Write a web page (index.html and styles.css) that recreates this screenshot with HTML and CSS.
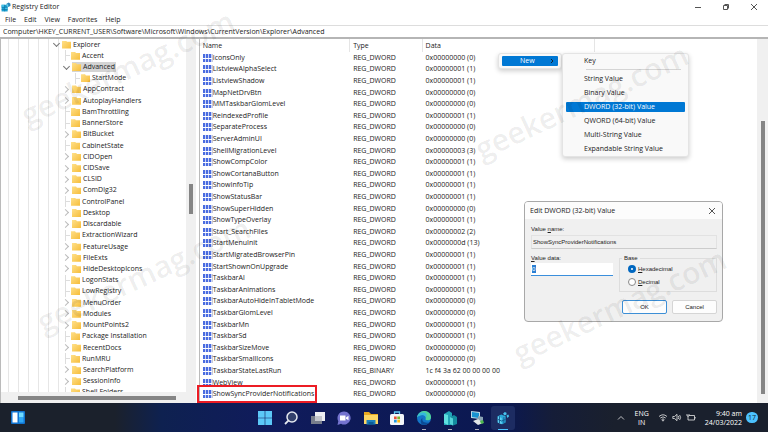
FILE: index.html
```html
<!DOCTYPE html>
<html lang="en">
<head>
<meta charset="utf-8">
<title>Registry Editor</title>
<link rel="stylesheet" href="styles.css">
</head>
<body>
<main class="window">
  <header class="titlebar">
    <svg class="app-icon" viewBox="0 0 18 18"><path d="M1 5h11v12H1z" fill="#1b9fd0"/><path d="M1 5h5v4H1zM7 10h5v3H7z" fill="#46c3e8"/><path d="M1 9.500h11M1 13.500h11M6.500 5v12" stroke="#0b6f9f"/><path d="M10 3l4-2 3 2v4l-4 2-3-2z" fill="#2b86b8"/><path d="M10 3l3 2v4l-3-2z" fill="#65d3f0"/></svg>
    <h1>Registry Editor</h1>
    <div class="controls">
      <button aria-label="Minimize"><svg viewBox="0 0 8 8"><path d="M1 4.500h6"/></svg></button>
      <button aria-label="Restore"><svg viewBox="0 0 8 8"><path d="M1.500 2.500h4v4h-4zM2.500 1.500h4v4"/></svg></button>
      <button aria-label="Close"><svg viewBox="0 0 8 8"><path d="M1 1l6 6M7 1L1 7"/></svg></button>
    </div>
  </header>
  <nav class="menubar"><button>File</button><button>Edit</button><button>View</button><button>Favorites</button><button>Help</button></nav>
  <input class="address" aria-label="Address" value="Computer\HKEY_CURRENT_USER\Software\Microsoft\Windows\CurrentVersion\Explorer\Advanced">
  <div class="panes">
    <section class="tree-pane">
      <ul class="tree">
        <li class="root open"><span>Explorer</span></li>
        <li class="leaf"><span>Accent</span></li>
        <li class="open selected"><span>Advanced</span></li>
        <li class="leaf deep"><span>StartMode</span></li>
        <li><span>AppContract</span></li>
        <li><span>AutoplayHandlers</span></li>
        <li class="leaf"><span>BamThrottling</span></li>
        <li class="leaf"><span>BannerStore</span></li>
        <li><span>BitBucket</span></li>
        <li class="leaf"><span>CabinetState</span></li>
        <li><span>CIDOpen</span></li>
        <li><span>CIDSave</span></li>
        <li><span>CLSID</span></li>
        <li><span>ComDlg32</span></li>
        <li class="leaf"><span>ControlPanel</span></li>
        <li><span>Desktop</span></li>
        <li><span>Discardable</span></li>
        <li class="leaf"><span>ExtractionWizard</span></li>
        <li><span>FeatureUsage</span></li>
        <li><span>FileExts</span></li>
        <li><span>HideDesktopIcons</span></li>
        <li class="leaf"><span>LogonStats</span></li>
        <li class="leaf"><span>LowRegistry</span></li>
        <li><span>MenuOrder</span></li>
        <li><span>Modules</span></li>
        <li><span>MountPoints2</span></li>
        <li class="leaf"><span>Package Installation</span></li>
        <li><span>RecentDocs</span></li>
        <li class="leaf"><span>RunMRU</span></li>
        <li><span>SearchPlatform</span></li>
        <li><span>SessionInfo</span></li>
        <li class="leaf"><span>Shell Folders</span></li>
      </ul>
      <div class="vbar tree-vbar"><i></i></div>
      <div class="hbar"><i></i></div>
    </section>
    <section class="list-pane">
      <table class="values">
        <thead><tr><th>Name</th><th>Type</th><th>Data</th></tr></thead>
        <tbody>
          <tr><td>IconsOnly</td><td>REG_DWORD</td><td>0x00000000 (0)</td></tr>
          <tr><td>ListviewAlphaSelect</td><td>REG_DWORD</td><td>0x00000001 (1)</td></tr>
          <tr><td>ListviewShadow</td><td>REG_DWORD</td><td>0x00000001 (1)</td></tr>
          <tr><td>MapNetDrvBtn</td><td>REG_DWORD</td><td>0x00000000 (0)</td></tr>
          <tr><td>MMTaskbarGlomLevel</td><td>REG_DWORD</td><td>0x00000000 (0)</td></tr>
          <tr><td>ReindexedProfile</td><td>REG_DWORD</td><td>0x00000001 (1)</td></tr>
          <tr><td>SeparateProcess</td><td>REG_DWORD</td><td>0x00000000 (0)</td></tr>
          <tr><td>ServerAdminUI</td><td>REG_DWORD</td><td>0x00000000 (0)</td></tr>
          <tr><td>ShellMigrationLevel</td><td>REG_DWORD</td><td>0x00000003 (3)</td></tr>
          <tr><td>ShowCompColor</td><td>REG_DWORD</td><td>0x00000001 (1)</td></tr>
          <tr><td>ShowCortanaButton</td><td>REG_DWORD</td><td>0x00000001 (1)</td></tr>
          <tr><td>ShowInfoTip</td><td>REG_DWORD</td><td>0x00000001 (1)</td></tr>
          <tr><td>ShowStatusBar</td><td>REG_DWORD</td><td>0x00000001 (1)</td></tr>
          <tr><td>ShowSuperHidden</td><td>REG_DWORD</td><td>0x00000000 (0)</td></tr>
          <tr><td>ShowTypeOverlay</td><td>REG_DWORD</td><td>0x00000001 (1)</td></tr>
          <tr><td>Start_SearchFiles</td><td>REG_DWORD</td><td>0x00000002 (2)</td></tr>
          <tr><td>StartMenuInit</td><td>REG_DWORD</td><td>0x0000000d (13)</td></tr>
          <tr><td>StartMigratedBrowserPin</td><td>REG_DWORD</td><td>0x00000001 (1)</td></tr>
          <tr><td>StartShownOnUpgrade</td><td>REG_DWORD</td><td>0x00000001 (1)</td></tr>
          <tr><td>TaskbarAl</td><td>REG_DWORD</td><td>0x00000001 (1)</td></tr>
          <tr><td>TaskbarAnimations</td><td>REG_DWORD</td><td>0x00000001 (1)</td></tr>
          <tr><td>TaskbarAutoHideInTabletMode</td><td>REG_DWORD</td><td>0x00000000 (0)</td></tr>
          <tr><td>TaskbarGlomLevel</td><td>REG_DWORD</td><td>0x00000000 (0)</td></tr>
          <tr><td>TaskbarMn</td><td>REG_DWORD</td><td>0x00000001 (1)</td></tr>
          <tr><td>TaskbarSd</td><td>REG_DWORD</td><td>0x00000001 (1)</td></tr>
          <tr><td>TaskbarSizeMove</td><td>REG_DWORD</td><td>0x00000000 (0)</td></tr>
          <tr><td>TaskbarSmallIcons</td><td>REG_DWORD</td><td>0x00000000 (0)</td></tr>
          <tr><td>TaskbarStateLastRun</td><td>REG_BINARY</td><td>1c f4 3a 62 00 00 00 00</td></tr>
          <tr><td>WebView</td><td>REG_DWORD</td><td>0x00000001 (1)</td></tr>
          <tr class="marked"><td>ShowSyncProviderNotifications</td><td>REG_DWORD</td><td>0x00000000 (0)</td></tr>
        </tbody>
      </table>
      <div class="vbar list-vbar"><i></i></div>
    </section>
  </div>
</main>

<div class="menu menu-root"><button class="active">New<svg viewBox="0 0 4 6"><path d="M1 1l2 2-2 2" fill="none" stroke="#123"/></svg></button></div>
<div class="menu menu-sub">
  <button>Key</button>
  <hr>
  <button>String Value</button>
  <button>Binary Value</button>
  <button class="active">DWORD (32-bit) Value</button>
  <button>QWORD (64-bit) Value</button>
  <button>Multi-String Value</button>
  <button>Expandable String Value</button>
</div>

<form class="dialog">
  <div class="dialog-title"><h2>Edit DWORD (32-bit) Value</h2><button type="button" aria-label="Close dialog"><svg viewBox="0 0 8 8"><path d="M1 1l6 6M7 1L1 7"/></svg></button></div>
  <div class="dialog-body">
    <label for="vname">Value <u>n</u>ame:</label>
    <input id="vname" class="name-box" readonly value="ShowSyncProviderNotifications">
    <div class="dialog-row">
      <div class="data-field">
        <label for="vdata"><u>V</u>alue data:</label>
        <input id="vdata" class="data-box" value="0">
      </div>
      <fieldset>
        <legend>Base</legend>
        <label><input type="radio" name="base" checked><span><u>H</u>exadecimal</span></label>
        <label><input type="radio" name="base"><span><u>D</u>ecimal</span></label>
      </fieldset>
    </div>
    <div class="dialog-actions"><button type="button" class="primary">OK</button><button type="button">Cancel</button></div>
  </div>
</form>

<footer class="taskbar">
  <button class="widgets" aria-label="Widgets"><svg viewBox="0 0 14 13"><rect width="14" height="13" rx="1" fill="#1173cf"/><path d="M1.500 1.500h5v10h-5z" fill="#fff"/><path d="M8 1.500h4.500v5H8z" fill="#6fdcff"/><path d="M8 6.500h4.500v5H8z" fill="#2fa8f5"/></svg></button>
  <div class="apps">
    <button aria-label="Start"><svg viewBox="0 0 16 16"><path d="M1 1h6.700v6.700H1zM8.300 1H15v6.700H8.300zM1 8.300h6.700V15H1zM8.300 8.300H15V15H8.300z" fill="#5cc8f7"/></svg></button>
    <button aria-label="Search"><svg viewBox="0 0 16 16"><circle cx="9" cy="7" r="5" fill="#33406c" stroke="#e4e8f0" stroke-width="1.500"/><path d="M5.400 10.600L2 14" stroke="#e4e8f0" stroke-width="1.800"/></svg></button>
    <button aria-label="Task view"><svg viewBox="0 0 16 16"><path d="M1 6h11v8H1z" fill="#777d8c"/><path d="M5 2h10v9H5z" fill="#eceef2"/><path d="M5 6h7v5H5z" fill="#c2c5cc"/></svg></button>
    <button aria-label="Chat"><svg viewBox="0 0 16 16"><path d="M8 1.500a6.500 6.500 0 1 1-3 12.200L1.500 15l.8-3.800A6.500 6.500 0 0 1 8 1.500z" fill="#7473cf"/><path d="M4 5.500h5.500v5H4zM10 7.500l2.500-1.700v4.400L10 8.800z" fill="#fff"/></svg></button>
    <button aria-label="File Explorer"><svg viewBox="0 0 16 16"><path d="M1 2h5l2 2h7v10H1z" fill="#e9a820"/><path d="M1 5h14v9H1z" fill="#fdd663"/><path d="M3.500 10h9v4.500h-9z" fill="#1c7fbd"/><path d="M5.500 12h5v2.500h-5z" fill="#0b5d97"/></svg></button>
    <button aria-label="Store"><svg viewBox="0 0 16 16"><path d="M5.500 5V2h5v3" fill="none" stroke="#61c9f3" stroke-width="1.300"/><rect x="1" y="4" width="14" height="11" rx="1.500" fill="#f3f6f9"/><path d="M5 6.500h2.700v2.700H5z" fill="#e94f35"/><path d="M8.300 6.500H11v2.700H8.300z" fill="#7fb82b"/><path d="M5 9.800h2.700v2.700H5z" fill="#2399e0"/><path d="M8.300 9.800H11v2.700H8.300z" fill="#f9b914"/></svg></button>
    <button class="running" aria-label="Edge"><svg viewBox="0 0 16 16"><circle cx="8" cy="8" r="7" fill="#1376c9"/><path d="M1 7.500C2 2.500 6 .8 9 1c4 .3 6.500 3.500 6 7-.5 2.500-4 3-5.500 1.500C10.500 7 9 5 6.500 5 4 5 2 6 1 7.500z" fill="#4fd39b"/><path d="M1 7.500C2 4 4 2.500 7 2.500c3.500 0 4.500 2.800 3 5C9.500 6 8 5 6 5 4 5 2 6 1 7.500z" fill="#35b8dc"/><path d="M6.500 8c-1 3 1.500 5.500 6.500 4.500-2 2.500-5 3-7.500 1.500C4 12 4.500 9 6.500 8z" fill="#0b4b96"/></svg></button>
    <button class="running" aria-label="Server"><svg viewBox="0 0 16 16"><path d="M2 4l5-3 3 2v12H2z" fill="#22a6b8"/><path d="M2 4l4 1v10l-4-2z" fill="#5fe0e0"/><path d="M8 7l4-2 3 2v7l-4 1.500L8 14z" fill="#148c9f"/><path d="M8 7l3 1.500v7L8 14z" fill="#53d3d8"/></svg></button>
    <button class="running" aria-label="Remote desktop"><svg viewBox="0 0 16 16"><path d="M2 1l9 1v7L2 8z" fill="#b9d8e8"/><path d="M3 2l7 1v5L3 7z" fill="#1792d1"/><path d="M9 6l5 1v5l-5 1z" fill="#8aa4b4"/><path d="M4 11l5-2 5 4-5 2z" fill="#e2e6e8"/><path d="M11 11l3-1 1 3-3 1z" fill="#4cb74f"/></svg></button>
    <button class="running current" aria-label="Registry Editor"><svg viewBox="0 0 16 16"><path d="M2 6l4-2 5 2v7l-4 2-5-2z" fill="#2aa8d8"/><path d="M2 6l4.500 2v7L2 13z" fill="#60d2f4"/><path d="M4 6v8M2 9.500l4.500 2 4.500-2M9 7v7" stroke="#11568c" fill="none"/><path d="M8 3l2-2 2 1v2l-2 1zM12 5l2-1 1 2-2 2z" fill="#47c4ee"/></svg></button>
  </div>
  <div class="tray">
    <svg class="chevron" viewBox="0 0 10 8"><path d="M2 6l3-3 3 3"/></svg>
    <div class="lang">ENG<br>IN</div>
    <svg viewBox="0 0 10 9"><path d="M1 3.500Q5 0 9 3.500M2.300 5Q5 2.700 7.700 5M3.600 6.500Q5 5.200 6.400 6.500"/><circle cx="5" cy="7.500" r=".6"/></svg>
    <svg viewBox="0 0 10 9"><path d="M.8 3.500h1.700L5 1.300v6.400L2.500 5.500H.8zM6.300 3q1 1.500 0 3M7.600 2q2 2.500 0 5"/></svg>
    <svg viewBox="0 0 10 9"><path d="M3 2.500h5.500v4.500H2V5M9.200 4v1.500M1 1v2h2V1M2 3v2"/></svg>
    <div class="clock">9:40 am<br>24/03/2022</div>
    <span class="badge">17</span>
  </div>
</footer>

<span class="watermark wm-a">geekermag.com</span>
<span class="watermark wm-b">geekermag.com</span>
<span class="watermark wm-c">geekermag.com</span>
<span class="watermark wm-d">geekermag.com</span>
</body>
</html>
```
FILE: styles.css
```css
* { box-sizing: border-box; }
body {
  margin: 0;
  height: 100vh;
  display: flex;
  flex-direction: column;
  overflow: hidden;
  position: relative;
  background: #fff;
  color: #222;
  font: 7px/10px "Open Sans", "Noto Sans", sans-serif;
}
button, input { font: inherit; color: inherit; }
button { border: 0; padding: 0; background: none; }
h1, h2 { margin: 0; font-size: 7px; font-weight: 400; }

.window { flex: 1; min-height: 0; display: flex; flex-direction: column; }
.titlebar { display: flex; align-items: center; height: 14px; }
.app-icon { width: 10px; height: 10px; margin: 0 1px; }
.controls { margin-left: auto; display: flex; }
.controls button { width: 28px; height: 13px; display: grid; place-items: center; }
.controls svg, .dialog-title svg { width: 8px; height: 8px; fill: none; stroke: #555; }

.menubar { display: flex; gap: 8px; height: 11px; padding-left: 5px; }
.address {
  height: 14px;
  border: solid #ddd;
  border-width: 1px 0 2px;
  border-bottom-color: #b5b5b5;
  padding: 0 3px;
  background: #fff;
  outline: 0;
}

.panes { flex: 1; min-height: 0; display: grid; grid-template-columns: 26% 1fr; }
.tree-pane {
  display: grid;
  grid-template: minmax(0, 1fr) 11px / 1fr 10px;
  padding-right: 3px;
  border-left: 1px solid #bbb;
  border-right: 1px solid #bbb;
  min-height: 0;
  overflow: hidden;
}
.tree {
  list-style: none;
  margin: 0;
  padding: 0;
  height: calc(100% + 6px);
  display: grid;
  grid-template-rows: repeat(32, 1fr);
  background: repeating-linear-gradient(90deg, transparent 0 7px, #e6e6e6 7px 8px, transparent 8px 10px) 0 0 / 58px 100% no-repeat;
}
.tree li { display: flex; align-items: center; gap: 1px; padding-left: 60px; min-height: 0; }
.tree .root { padding-left: 50px; }
.tree .deep { padding-left: 70px; }
.tree li::before { content: ""; flex: none; width: 9px; height: 100%; }
.tree li:not(.open):not(.leaf)::before {
  width: 4px;
  height: 4px;
  margin: 0 3px 0 2px;
  border: solid #bbb;
  border-width: 1px 1px 0 0;
  transform: rotate(45deg);
}
.tree .open::before {
  width: 4px;
  height: 4px;
  margin: 0 2px 2px 3px;
  border: solid #777;
  border-width: 0 1px 1px 0;
  transform: rotate(45deg);
}
.tree .leaf::before {
  background:
    linear-gradient(#ddd, #ddd) 4px 0 / 1px 100% no-repeat,
    linear-gradient(#ddd, #ddd) 4px 50% / 5px 1px no-repeat;
}
.tree span { display: flex; align-items: center; gap: 2px; padding-right: 1px; white-space: nowrap; }
.tree span::before {
  content: "";
  width: 9px;
  height: 8px;
  background: linear-gradient(135deg, #ffe08a, #f6bd3a);
  clip-path: polygon(0 0, 45% 0, 55% 15%, 100% 15%, 100% 100%, 0 100%);
}
.tree .selected span { background: #d4d4d4; }

.vbar, .hbar { background: #f0f0f0; display: flex; justify-content: center; }
.vbar i { width: 4px; background: #858585; }
.tree-vbar i { height: 30px; margin-top: 145px; }
.hbar { grid-column: 1 / -1; position: relative; align-items: center; justify-content: flex-start; }
.hbar i { width: 81%; height: 4px; margin-left: 17px; background: #858585; }

.list-pane { display: grid; grid-template-columns: 1fr 11px; min-height: 0; }
.list-vbar i { height: 75%; margin-top: 82px; }
.values { display: flex; flex-direction: column; min-height: 0; padding-bottom: 3px; }
.values thead { display: block; flex: none; }
.values tbody { flex: 1; min-height: 0; display: grid; grid-template-rows: repeat(30, 1fr); }
.values tr { display: grid; grid-template-columns: 27% 13% 31% 1fr; align-items: center; min-height: 0; }
.values th { height: 13px; padding: 2px 3px 0; text-align: left; font-weight: 400; border-right: 1px solid #e5e5e5; }
.values td { padding: 0 3px; white-space: nowrap; }
.values td:first-child { display: flex; align-items: center; justify-self: start; padding-right: 0; }
.values td:first-child::before {
  content: "";
  width: 9px;
  height: 8px;
  border: solid #c8cbd8;
  border-width: 0 1px 0 0;
  background:
    linear-gradient(#fff, #fff) 0 4px / 100% 1px no-repeat,
    repeating-linear-gradient(90deg, #4a6ce0 0 2px, #c8d2f8 2px 3px);
}
.marked td:first-child { height: 12px; outline: 2px solid #ec1c24; outline-offset: 1px; }

.menu {
  position: absolute;
  background: #f9f9f9;
  border: 1px solid #e4e4e4;
  border-radius: 3px;
  box-shadow: 0 2px 5px #0003;
  display: flex;
  flex-direction: column;
  padding: 0 3px;
}
.menu button { height: 10px; margin: 2px 0; padding-left: 18px; text-align: left; border-radius: 1px; }
.menu .active { background: #0078d4; color: #fff; }
.menu hr { width: 80%; margin: 1px 4px 2px auto; border: 0; border-top: 1px solid #d5d5d5; }
.menu-root { left: 498px; top: 53px; width: 64px; }
.menu-root button { display: flex; align-items: center; justify-content: space-between; padding-right: 4px; }
.menu-root svg { width: 4px; height: 6px; }
.menu-sub { left: 562px; top: 53px; width: 127px; }

.dialog {
  position: absolute;
  left: 524px;
  top: 201px;
  width: 199px;
  background: #f0f0f0;
  border: 1px solid #a8a8a8;
  border-radius: 4px;
  overflow: hidden;
}
.dialog-title { display: flex; align-items: center; justify-content: space-between; height: 17px; padding: 0 6px 0 5px; background: #fcfcfc; }
.dialog-title button { display: flex; }
.dialog-body { padding: 6px 5px 7px 6px; display: flex; flex-direction: column; font: 6px/8px "Liberation Sans", sans-serif; }
.dialog-body > label, .data-field label { height: 9px; }
.name-box { height: 14px; margin: 1px 0 5px; padding: 0 1px; background: #f0f0f0; border: 1px solid #e2e2e2; border-bottom-color: #ccc; }
.dialog-row { display: flex; gap: 6px; align-items: flex-start; }
.data-field { flex: 1; display: flex; flex-direction: column; }
.data-box {
  width: 100%;
  height: 13px;
  padding: 0 1px;
  border: 0;
  border-bottom: 1px solid #3b8fdc;
  outline: 0;
  color: #fff;
  background: linear-gradient(#2a7fd4, #2a7fd4) 1px 2px / 4px 8px no-repeat #fff;
}
fieldset { flex: none; width: 98px; height: 38px; margin: 0; padding: 0 8px; border: 1px solid #ddd; }
legend { padding: 0 2px; margin-left: -6px; }
fieldset label { display: flex; align-items: center; gap: 2px; height: 13px; }
fieldset input { appearance: none; width: 8px; height: 8px; margin: 0; border: 1px solid #888; border-radius: 50%; background: #fff; }
fieldset input:checked { border: 3px solid #0067c0; }
.dialog-actions { display: flex; justify-content: flex-end; gap: 5px; margin-top: 8px; }
.dialog-actions button { width: 45px; height: 14px; background: #fdfdfd; border: 1px solid #d5d5d5; border-radius: 2px; }
.dialog-actions .primary { border-color: #3d8fd6; }

.taskbar {
  flex: none;
  height: 29px;
  display: grid;
  grid-template-columns: 1fr 263px 1fr;
  align-items: center;
  color: #fff;
  background: linear-gradient(90deg, #1b212c 15%, #0e2150 21%, #101b5c 35%, #0b1850 66%, #151d38 72%, #1a202d 80%);
}
.widgets { width: 14px; height: 13px; margin-left: 11px; }
.widgets svg { display: block; }
.apps { display: flex; justify-content: space-between; }
.apps button { position: relative; width: 24px; height: 24px; display: grid; place-items: center; border-radius: 3px; }
.apps svg { width: 16px; height: 16px; }
.apps .running::after { content: ""; position: absolute; left: 10px; bottom: 0; width: 4px; height: 1px; background: #aab; }
.apps .current { background: #1d2c62; }
.apps .current svg { width: 14px; height: 14px; }
.apps .current::after { left: 7px; width: 10px; background: #4cc2ff; }
.tray { display: flex; align-items: center; justify-content: flex-end; gap: 4px; padding-right: 10px; font-size: 7px; line-height: 9px; }
.tray svg { width: 10px; height: 9px; fill: none; stroke: #e8e8e8; stroke-width: 0.8; }
.tray .chevron { margin-right: 5px; }
.lang { text-align: center; margin-right: 5px; }
.clock { text-align: right; margin-left: 5px; }
.badge { width: 12px; height: 11px; border-radius: 6px; background: #4cc2ff; color: #123; text-align: center; line-height: 11px; }

.watermark {
  position: absolute;
  width: 230px;
  text-align: center;
  font-size: 30px;
  font-weight: 600;
  line-height: 40px;
  color: #00000014;
  transform: rotate(-25deg);
  pointer-events: none;
}
.wm-a { left: 12px; top: 48px; }
.wm-b { left: 28px; top: 255px; }
.wm-c { left: 466px; top: 82px; }
.wm-d { left: 504px; top: 286px; }
```
